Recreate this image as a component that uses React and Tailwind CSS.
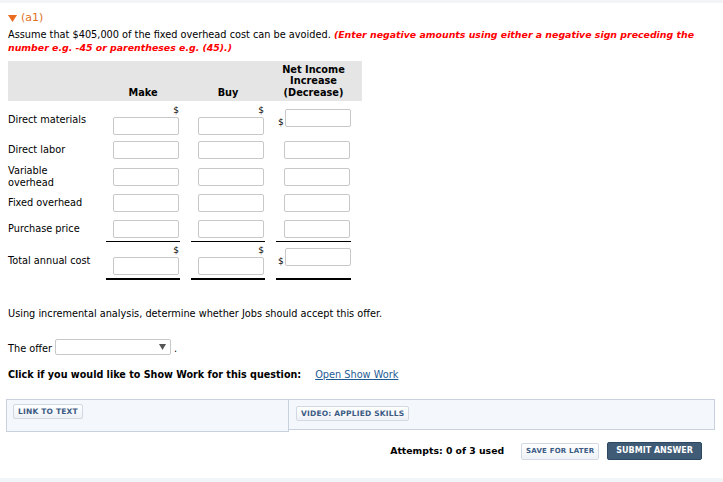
import React from 'react';

const font = { fontFamily: '"DejaVu Sans", Verdana, sans-serif' };

const Box = ({ className = '' }) => (
  <div className={`w-[66px] h-[18px] border border-[#c8c8c8] rounded-[2px] bg-white ${className}`} />
);

const Dollar = () => <span className="text-[9px] leading-[10px] text-black">$</span>;

const rows = [
  { label: 'Direct labor', h: 'h-[26px]' },
  { label: 'Variable overhead', h: 'h-[27px]', wrap: true },
  { label: 'Fixed overhead', h: 'h-[26px]' },
  { label: 'Purchase price', h: 'h-[26px]', line: true },
];

const BtnLight = ({ children, className = '' }) => (
  <button className={`h-[15px] px-[4px] rounded-[2px] border border-[#d3d9e2] bg-gradient-to-b from-white to-[#eef1f5] text-[7.5px] font-bold tracking-[0.2px] text-[#3b5b84] leading-none ${className}`}>
    {children}
  </button>
);

export default function App() {
  return (
    <div className="w-[723px] h-[482px] bg-white text-[9.75px] text-black flex flex-col" style={font}>
      <div className="h-[3px] bg-[#f2f4f7]" />

      <div className="px-[8px] pt-[8px] flex-1">
        {/* part heading */}
        <div className="flex items-center gap-[4px] text-[#e0701f] text-[11px] leading-[14px]">
          <svg width="9" height="7" viewBox="0 0 9 7"><path d="M0 0h9L4.5 7z" fill="#ea6a1f" /></svg>
          <span>(a1)</span>
        </div>

        <p className="mt-[3px] leading-[13px] whitespace-nowrap">
          Assume that $405,000 of the fixed overhead cost can be avoided.{' '}
          <span className="text-[#ff0000] font-bold italic text-[9.4px]">
            (Enter negative amounts using either a negative sign preceding the
            <br />number e.g. -45 or parentheses e.g. (45).)
          </span>
        </p>

        {/* table */}
        <div className="mt-[7px] w-[354px]">
          <div className="h-[40px] bg-[#e5e5e5] flex items-end pb-[3px] font-bold text-[9.75px] leading-[11.5px]">
            <div className="w-[98px]" />
            <div className="w-[74px] text-center">Make</div>
            <div className="w-[11px]" />
            <div className="w-[74px] text-center">Buy</div>
            <div className="w-[11px]" />
            <div className="w-[75px] text-center">Net Income<br />Increase<br />(Decrease)</div>
          </div>

          {/* direct materials */}
          <div className="mt-[2px] h-[34px] flex items-center">
            <div className="w-[98px] leading-[12px]">Direct materials</div>
            <div className="w-[74px] flex flex-col items-end pr-[1px]">
              <Dollar />
              <Box className="mt-[2px]" />
            </div>
            <div className="w-[11px]" />
            <div className="w-[74px] flex flex-col items-end pr-[1px]">
              <Dollar />
              <Box className="mt-[2px]" />
            </div>
            <div className="w-[11px]" />
            <div className="w-[75px] flex items-end pl-[2px] gap-[1px] mb-[4px]">
              <Dollar />
              <Box />
            </div>
          </div>

          {rows.map((r) => (
            <div key={r.label} className={`${r.h} flex items-stretch`}>
              <div className={`w-[98px] flex items-center leading-[12px] ${r.wrap ? 'pr-[50px]' : ''}`}>{r.label}</div>
              <div className={`w-[74px] flex items-center justify-end pr-[1px] ${r.line ? 'border-b border-black' : ''}`}>
                <Box />
              </div>
              <div className="w-[11px]" />
              <div className={`w-[74px] flex items-center justify-end pr-[1px] ${r.line ? 'border-b border-black' : ''}`}>
                <Box />
              </div>
              <div className="w-[11px]" />
              <div className={`w-[75px] flex items-center justify-end pr-[1px] ${r.line ? 'border-b border-black' : ''}`}>
                <Box />
              </div>
            </div>
          ))}

          {/* total */}
          <div className="h-[38px] flex items-stretch">
            <div className="w-[98px] flex items-center leading-[12px]">Total annual cost</div>
            <div className="w-[74px] flex flex-col items-end justify-center pr-[1px] border-b-2 border-black">
              <Dollar />
              <Box className="mt-[2px]" />
            </div>
            <div className="w-[11px]" />
            <div className="w-[74px] flex flex-col items-end justify-center pr-[1px] border-b-2 border-black">
              <Dollar />
              <Box className="mt-[2px]" />
            </div>
            <div className="w-[11px]" />
            <div className="w-[75px] flex items-center pl-[2px] gap-[1px] border-b-2 border-black">
              <div className="flex items-end gap-[1px] mb-[6px]">
                <Dollar />
                <Box />
              </div>
            </div>
          </div>
        </div>

        <p className="mt-[28px] leading-[12px]">Using incremental analysis, determine whether Jobs should accept this offer.</p>

        <div className="mt-[19px] flex items-end gap-[3px]">
          <span className="leading-[12px]">The offer</span>
          <div className="w-[116px] h-[16px] border border-[#c8c8c8] rounded-[2px] bg-white flex items-center justify-end pr-[4px]">
            <svg width="7" height="6" viewBox="0 0 7 6"><path d="M0 0h7L3.5 6z" fill="#555" /></svg>
          </div>
          <span className="leading-[12px]">.</span>
        </div>

        <div className="mt-[14px] flex items-center leading-[12px]">
          <span className="font-bold text-[9.6px]">Click if you would like to Show Work for this question:</span>
          <a className="ml-[14px] text-[#1e5b94] underline">Open Show Work</a>
        </div>

        {/* resources */}
        <div className="mt-[18px] -ml-[2px] w-[709px] flex items-start">
          <div className="w-[283px] h-[33px] bg-[#f4f7fb] border border-[#c9d1de] pl-[6px] pt-[4px]">
            <BtnLight>LINK TO TEXT</BtnLight>
          </div>
          <div className="flex-1 h-[31px] bg-[#f4f7fb] border-y border-r border-[#c9d1de] pl-[7px] pt-[6px]">
            <BtnLight>VIDEO: APPLIED SKILLS</BtnLight>
          </div>
        </div>

        <div className="mt-[10px] flex items-center justify-end pr-[13px]">
          <span className="font-bold text-[9.3px] mr-[17px]">Attempts: 0 of 3 used</span>
          <BtnLight className="h-[17px] px-[4px] text-[7px]">SAVE FOR LATER</BtnLight>
          <button className="ml-[8px] h-[18px] px-[8px] rounded-[2px] bg-[#3f5b76] border border-[#2f4862] text-white text-[8px] font-bold leading-none">
            SUBMIT ANSWER
          </button>
        </div>
      </div>

      <div className="h-[4px] bg-[#f2f5f8]" />
    </div>
  );
}
